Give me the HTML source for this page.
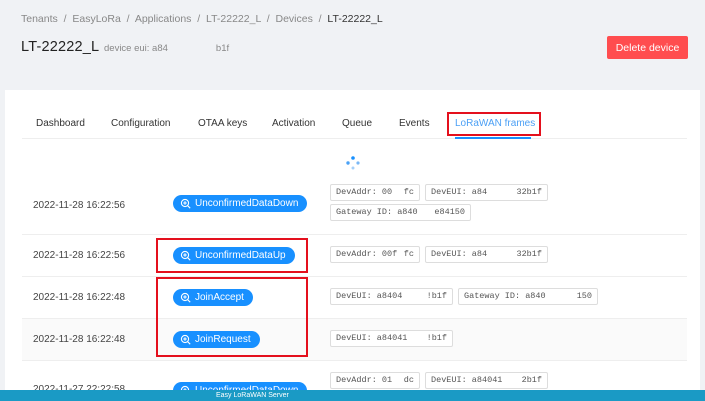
<!DOCTYPE html>
<html><head><meta charset="utf-8"><style>
*{box-sizing:border-box;margin:0;padding:0}
body{width:705px;height:401px;overflow:hidden;background:#f0f2f5;font-family:"Liberation Sans",sans-serif;position:relative;color:#333}
.a{position:absolute;white-space:nowrap}
.bc{top:13px;left:21px;font-size:10.5px;color:#888}
.bc b{font-weight:normal;color:#333}
.title{top:39px;left:21px;font-size:14.5px;color:#222;letter-spacing:0.2px}
.eui{top:43px;left:104px;font-size:9.5px;color:#888}
.del{top:36px;left:607px;width:81px;height:23px;background:#ff4d4f;color:#fff;font-size:10.5px;display:flex;align-items:center;justify-content:center;border-radius:2px}
.card{position:absolute;left:5px;top:90px;width:695px;height:311px;background:#fff}
.tab{top:118px;font-size:10px;color:#333}
.line{position:absolute;left:22px;width:665px;height:1px;background:#eee}
.time{font-size:10px;color:#444;left:33px}
.pill{height:17px;background:#1890ff;border-radius:9px;color:#fff;font-size:10px;line-height:17px;padding:0 9px 0 22px}
.pill svg{position:absolute;left:7px;top:3px}
.box{height:17px;border:1px solid #ddd;font-family:"Liberation Mono",monospace;font-size:8.5px;line-height:15px;color:#555;padding:0 5px;border-radius:2px;background:#fff}
.red{position:absolute;border:2px solid #e4101d}
</style></head><body>
<div class="a bc">Tenants &nbsp;/&nbsp; EasyLoRa &nbsp;/&nbsp; Applications &nbsp;/&nbsp; LT-22222_L &nbsp;/&nbsp; Devices &nbsp;/&nbsp; <b>LT-22222_L</b></div>
<div class="a title">LT-22222_L</div>
<div class="a eui">device eui: a84<span style="display:inline-block;width:48px"></span>b1f</div>
<div class="a del">Delete device</div>
<div class="card"></div>
<div class="a tab" style="left:36px">Dashboard</div>
<div class="a tab" style="left:111px">Configuration</div>
<div class="a tab" style="left:198px">OTAA keys</div>
<div class="a tab" style="left:272px">Activation</div>
<div class="a tab" style="left:342px">Queue</div>
<div class="a tab" style="left:399px">Events</div>
<div class="a tab" style="left:455px;color:#4a9ff5">LoRaWAN frames</div>
<div class="line" style="top:138px"></div>
<div class="a" style="left:455px;top:137px;width:76px;height:2px;background:#1890ff"></div>
<div class="red" style="left:447px;top:112px;width:94px;height:24px"></div>
<svg class="a" style="left:346px;top:156px" width="14" height="14"><circle cx="7" cy="2" r="1.8" fill="#1890ff"/><circle cx="12" cy="7" r="1.6" fill="#7bb8f5"/><circle cx="7" cy="12" r="1.5" fill="#a5cff8"/><circle cx="2" cy="7" r="1.7" fill="#4aa2f6"/></svg>
<div class="a" style="left:22px;top:318px;width:665px;height:42px;background:#fafafa"></div>
<div class="line" style="top:234px"></div><div class="line" style="top:276px"></div><div class="line" style="top:318px"></div><div class="line" style="top:360px"></div>

<div class="a time" style="top:200px">2022-11-28 16:22:56</div>
<div class="a time" style="top:250px">2022-11-28 16:22:56</div>
<div class="a time" style="top:292px">2022-11-28 16:22:48</div>
<div class="a time" style="top:334px">2022-11-28 16:22:48</div>
<div class="a time" style="top:384px">2022-11-27 22:22:58</div>

<div class="a pill" style="left:173px;top:195px">UnconfirmedDataDown<svg width="11" height="11"><circle cx="5" cy="5" r="3.6" fill="none" stroke="#fff" stroke-width="1.1"/><path d="M3.2 5h3.6M5 3.2v3.6M7.6 7.6l2.6 2.6" stroke="#fff" stroke-width="1.1"/></svg></div>
<div class="a pill" style="left:173px;top:247px">UnconfirmedDataUp<svg width="11" height="11"><circle cx="5" cy="5" r="3.6" fill="none" stroke="#fff" stroke-width="1.1"/><path d="M3.2 5h3.6M5 3.2v3.6M7.6 7.6l2.6 2.6" stroke="#fff" stroke-width="1.1"/></svg></div>
<div class="a pill" style="left:173px;top:289px">JoinAccept<svg width="11" height="11"><circle cx="5" cy="5" r="3.6" fill="none" stroke="#fff" stroke-width="1.1"/><path d="M3.2 5h3.6M5 3.2v3.6M7.6 7.6l2.6 2.6" stroke="#fff" stroke-width="1.1"/></svg></div>
<div class="a pill" style="left:173px;top:331px">JoinRequest<svg width="11" height="11"><circle cx="5" cy="5" r="3.6" fill="none" stroke="#fff" stroke-width="1.1"/><path d="M3.2 5h3.6M5 3.2v3.6M7.6 7.6l2.6 2.6" stroke="#fff" stroke-width="1.1"/></svg></div>
<div class="a pill" style="left:173px;top:382px">UnconfirmedDataDown<svg width="11" height="11"><circle cx="5" cy="5" r="3.6" fill="none" stroke="#fff" stroke-width="1.1"/><path d="M3.2 5h3.6M5 3.2v3.6M7.6 7.6l2.6 2.6" stroke="#fff" stroke-width="1.1"/></svg></div>

<div class="red" style="left:156px;top:238px;width:152px;height:35px"></div>
<div class="red" style="left:156px;top:277px;width:152px;height:80px"></div>

<div class="a box" style="left:330px;top:184px;width:90px">DevAddr: 00<span style="float:right">fc</span></div>
<div class="a box" style="left:425px;top:184px;width:123px">DevEUI: a84<span style="float:right">32b1f</span></div>
<div class="a box" style="left:330px;top:204px;width:141px">Gateway ID: a840<span style="float:right">e84150</span></div>
<div class="a box" style="left:330px;top:246px;width:90px">DevAddr: 00f<span style="float:right">fc</span></div>
<div class="a box" style="left:425px;top:246px;width:123px">DevEUI: a84<span style="float:right">32b1f</span></div>
<div class="a box" style="left:330px;top:288px;width:123px">DevEUI: a8404<span style="float:right">!b1f</span></div>
<div class="a box" style="left:458px;top:288px;width:140px">Gateway ID: a840<span style="float:right">150</span></div>
<div class="a box" style="left:330px;top:330px;width:123px">DevEUI: a84041<span style="float:right">!b1f</span></div>
<div class="a box" style="left:330px;top:372px;width:90px">DevAddr: 01<span style="float:right">dc</span></div>
<div class="a box" style="left:425px;top:372px;width:123px">DevEUI: a84041<span style="float:right">2b1f</span></div>

<div class="a" style="left:0;top:390px;width:705px;height:11px;background:#1a9ac5;color:#fff;font-size:7px;line-height:11px;padding-left:216px">Easy LoRaWAN Server</div>
</body></html>
